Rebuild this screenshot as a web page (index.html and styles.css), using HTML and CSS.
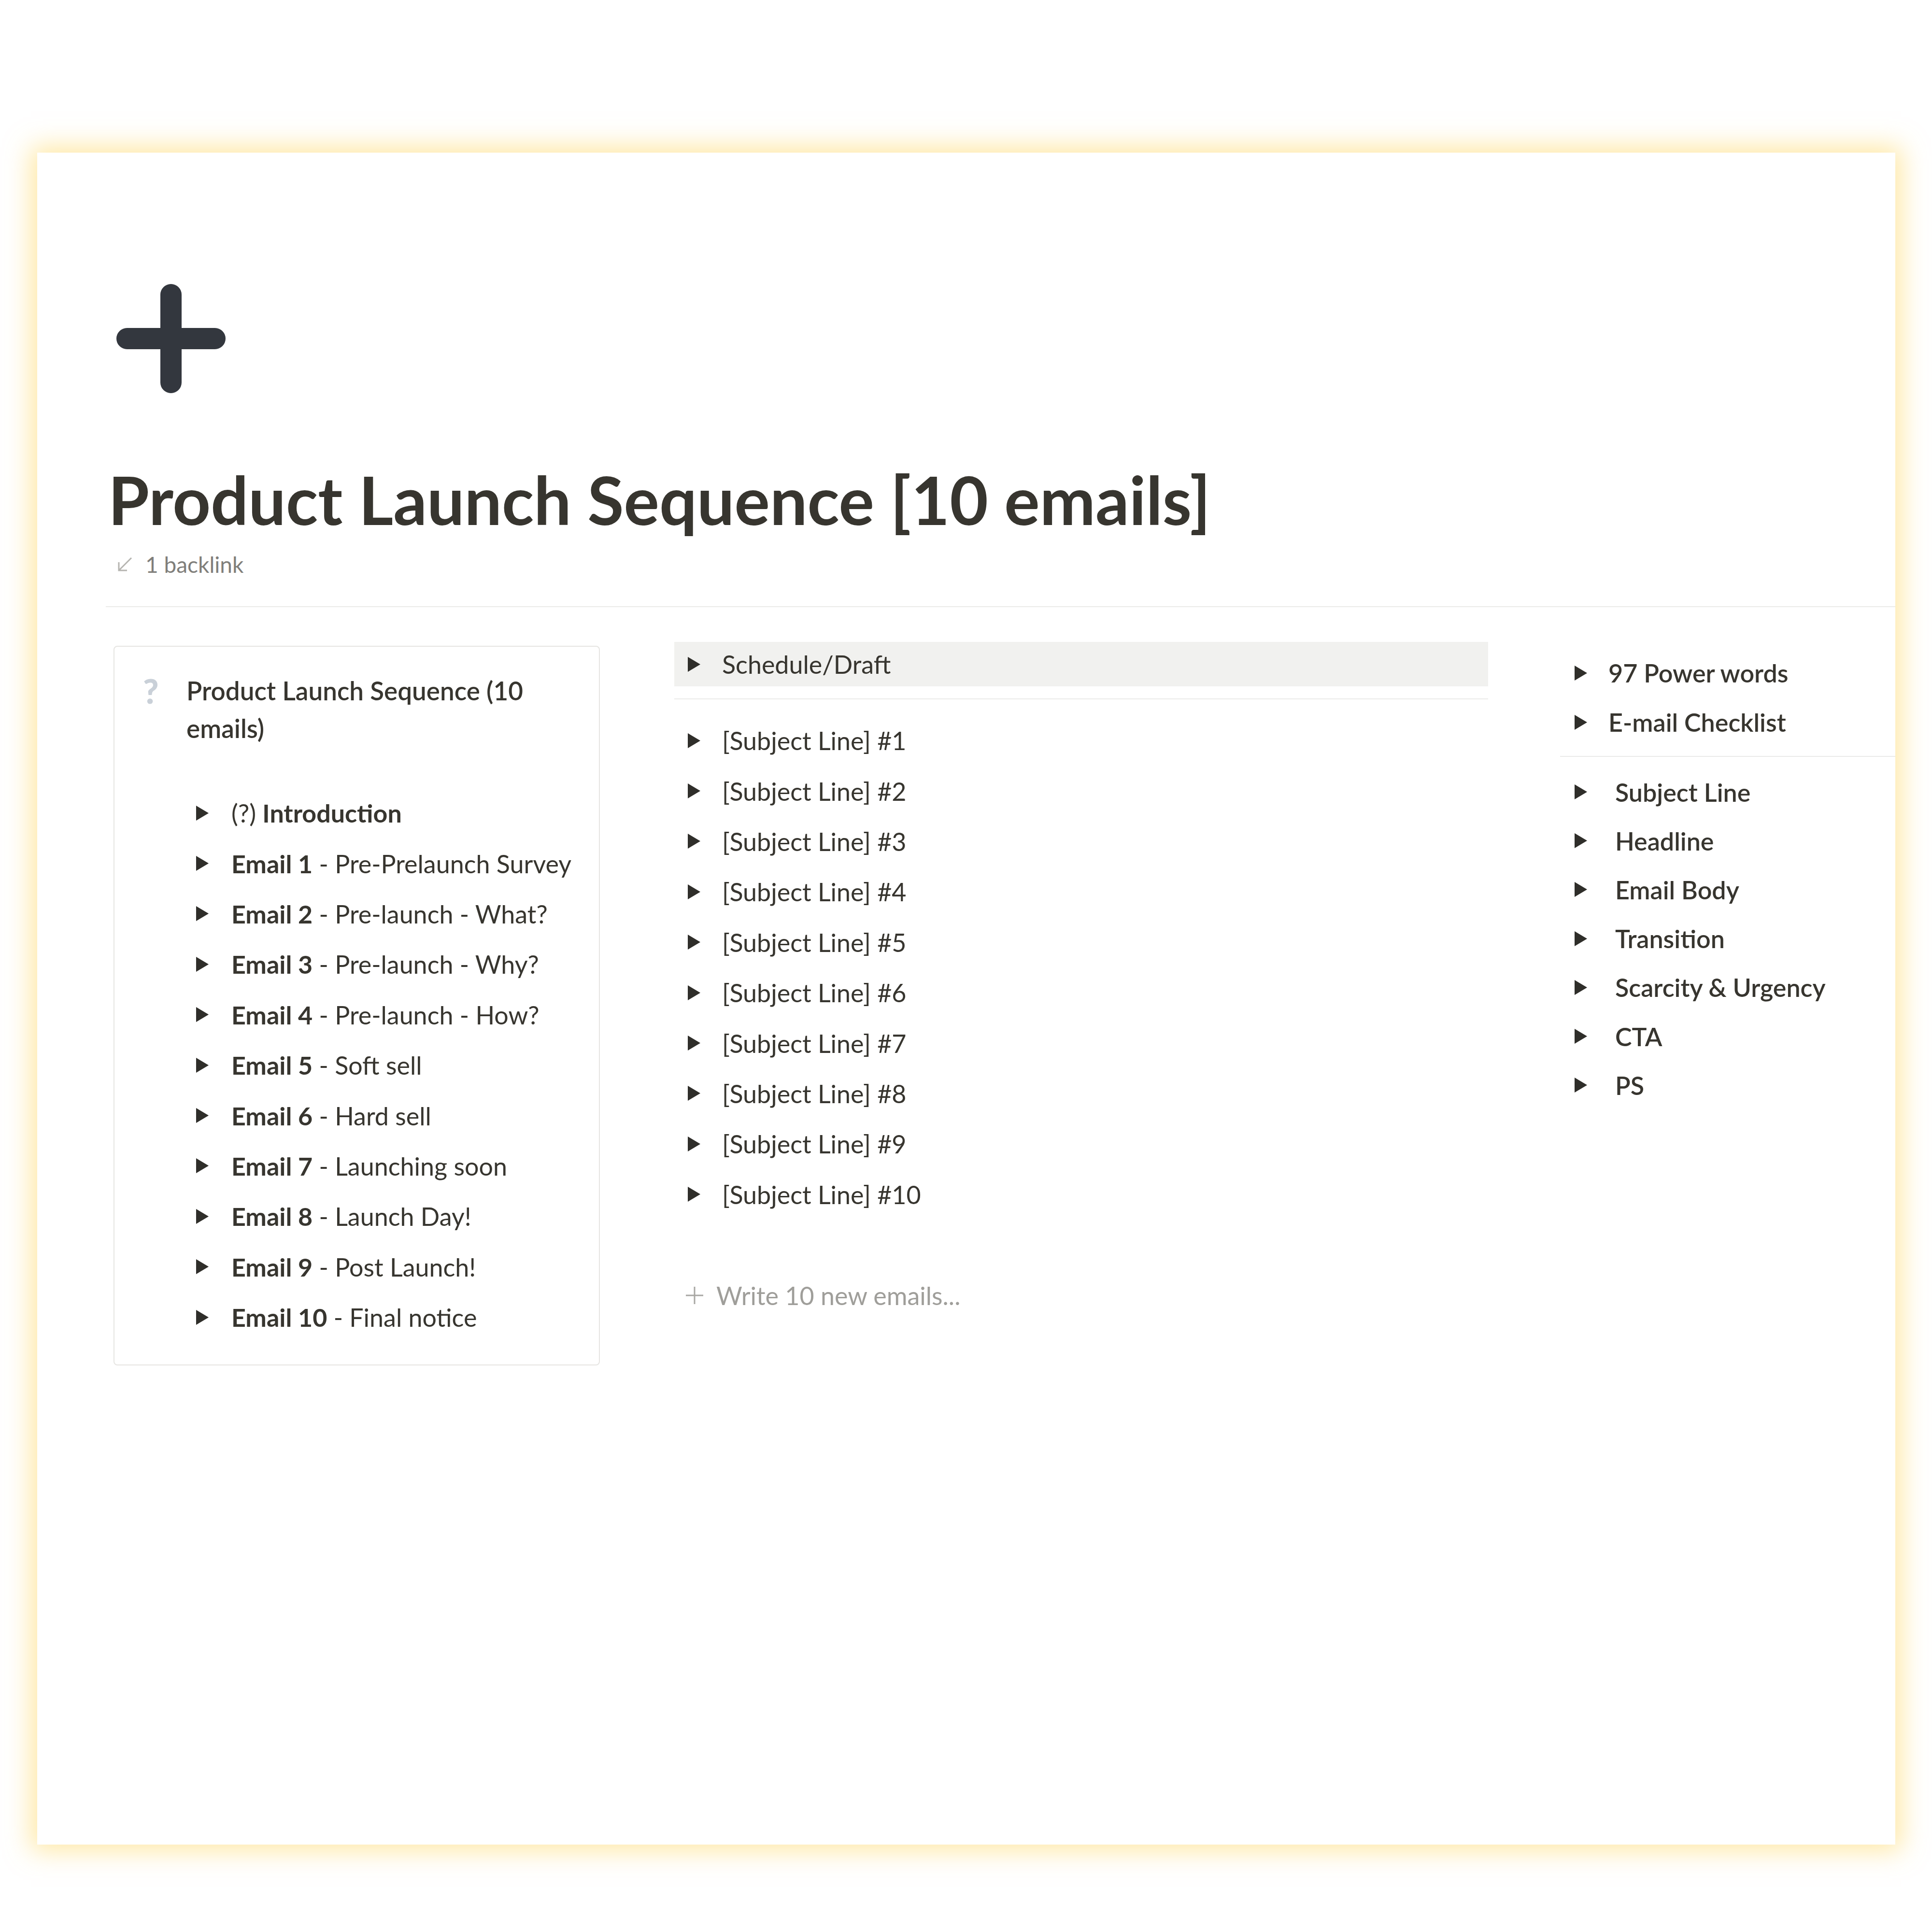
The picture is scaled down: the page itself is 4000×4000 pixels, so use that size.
FILE: index.html
```html
<!DOCTYPE html>
<html lang="en">
<head>
<meta charset="utf-8">
<title>Product Launch Sequence [10 emails]</title>
<link rel="stylesheet" href="styles.css">
</head>
<body>
<div class="panel">
  <div class="page">
    <div class="page-icon">
      <svg width="226" height="226" viewBox="0 0 226 226"><path d="M113 22V204M22 113H204" stroke="#33373e" stroke-width="44" stroke-linecap="round" fill="none"/></svg>
    </div>
    <h1 class="title">Product Launch Sequence [10 emails]</h1>
    <div class="backlinks">
      <svg class="bl-arrow" width="32" height="32" viewBox="0 0 32 32"><path d="M30 2L4 28M4 11V28H21" stroke="#b5b4b0" stroke-width="3" fill="none"/></svg>
      <span>1 backlink</span>
    </div>
    <div class="divider"></div>
    <div class="columns">
      <div class="col col-left">
        <div class="callout">
          <div class="callout-icon">?</div>
          <div class="callout-body">
            <div class="callout-title">Product Launch Sequence (10 emails)</div>
            <div class="toggle-list left-list">
              <div class="toggle"><svg class="tri" viewBox="0 0 28 33"><path d="M1 1L27 16.5L1 32Z"/></svg><span>(?) <b>Introduction</b></span></div>
              <div class="toggle"><svg class="tri" viewBox="0 0 28 33"><path d="M1 1L27 16.5L1 32Z"/></svg><span><b>Email 1</b> - Pre-Prelaunch Survey</span></div>
              <div class="toggle"><svg class="tri" viewBox="0 0 28 33"><path d="M1 1L27 16.5L1 32Z"/></svg><span><b>Email 2</b> - Pre-launch - What?</span></div>
              <div class="toggle"><svg class="tri" viewBox="0 0 28 33"><path d="M1 1L27 16.5L1 32Z"/></svg><span><b>Email 3</b> - Pre-launch - Why?</span></div>
              <div class="toggle"><svg class="tri" viewBox="0 0 28 33"><path d="M1 1L27 16.5L1 32Z"/></svg><span><b>Email 4</b> - Pre-launch - How?</span></div>
              <div class="toggle"><svg class="tri" viewBox="0 0 28 33"><path d="M1 1L27 16.5L1 32Z"/></svg><span><b>Email 5</b> - Soft sell</span></div>
              <div class="toggle"><svg class="tri" viewBox="0 0 28 33"><path d="M1 1L27 16.5L1 32Z"/></svg><span><b>Email 6</b> - Hard sell</span></div>
              <div class="toggle"><svg class="tri" viewBox="0 0 28 33"><path d="M1 1L27 16.5L1 32Z"/></svg><span><b>Email 7</b> - Launching soon</span></div>
              <div class="toggle"><svg class="tri" viewBox="0 0 28 33"><path d="M1 1L27 16.5L1 32Z"/></svg><span><b>Email 8</b> - Launch Day!</span></div>
              <div class="toggle"><svg class="tri" viewBox="0 0 28 33"><path d="M1 1L27 16.5L1 32Z"/></svg><span><b>Email 9</b> - Post Launch!</span></div>
              <div class="toggle"><svg class="tri" viewBox="0 0 28 33"><path d="M1 1L27 16.5L1 32Z"/></svg><span><b>Email 10</b> - Final notice</span></div>
            </div>
          </div>
        </div>
      </div>

      <div class="col col-mid">
        <div class="toggle schedule"><svg class="tri" viewBox="0 0 28 33"><path d="M1 1L27 16.5L1 32Z"/></svg><span>Schedule/Draft</span></div>
        <div class="divider mid-divider"></div>
        <div class="toggle-list mid-list">
          <div class="toggle"><svg class="tri" viewBox="0 0 28 33"><path d="M1 1L27 16.5L1 32Z"/></svg><span>[Subject Line] #1</span></div>
          <div class="toggle"><svg class="tri" viewBox="0 0 28 33"><path d="M1 1L27 16.5L1 32Z"/></svg><span>[Subject Line] #2</span></div>
          <div class="toggle"><svg class="tri" viewBox="0 0 28 33"><path d="M1 1L27 16.5L1 32Z"/></svg><span>[Subject Line] #3</span></div>
          <div class="toggle"><svg class="tri" viewBox="0 0 28 33"><path d="M1 1L27 16.5L1 32Z"/></svg><span>[Subject Line] #4</span></div>
          <div class="toggle"><svg class="tri" viewBox="0 0 28 33"><path d="M1 1L27 16.5L1 32Z"/></svg><span>[Subject Line] #5</span></div>
          <div class="toggle"><svg class="tri" viewBox="0 0 28 33"><path d="M1 1L27 16.5L1 32Z"/></svg><span>[Subject Line] #6</span></div>
          <div class="toggle"><svg class="tri" viewBox="0 0 28 33"><path d="M1 1L27 16.5L1 32Z"/></svg><span>[Subject Line] #7</span></div>
          <div class="toggle"><svg class="tri" viewBox="0 0 28 33"><path d="M1 1L27 16.5L1 32Z"/></svg><span>[Subject Line] #8</span></div>
          <div class="toggle"><svg class="tri" viewBox="0 0 28 33"><path d="M1 1L27 16.5L1 32Z"/></svg><span>[Subject Line] #9</span></div>
          <div class="toggle"><svg class="tri" viewBox="0 0 28 33"><path d="M1 1L27 16.5L1 32Z"/></svg><span>[Subject Line] #10</span></div>
        </div>
        <div class="new-row">
          <svg class="new-plus" width="40" height="40" viewBox="0 0 40 40"><path d="M20 2V38M2 20H38" stroke="#a8a7a3" stroke-width="3" fill="none"/></svg>
          <span>Write 10 new emails...</span>
        </div>
      </div>

      <div class="col col-right">
        <div class="toggle-list right-list-a">
          <div class="toggle"><svg class="tri" viewBox="0 0 28 33"><path d="M1 1L27 16.5L1 32Z"/></svg><span>97 Power words</span></div>
          <div class="toggle"><svg class="tri" viewBox="0 0 28 33"><path d="M1 1L27 16.5L1 32Z"/></svg><span>E-mail Checklist</span></div>
        </div>
        <div class="divider right-divider"></div>
        <div class="toggle-list right-list-b">
          <div class="toggle"><svg class="tri" viewBox="0 0 28 33"><path d="M1 1L27 16.5L1 32Z"/></svg><span>Subject Line</span></div>
          <div class="toggle"><svg class="tri" viewBox="0 0 28 33"><path d="M1 1L27 16.5L1 32Z"/></svg><span>Headline</span></div>
          <div class="toggle"><svg class="tri" viewBox="0 0 28 33"><path d="M1 1L27 16.5L1 32Z"/></svg><span>Email Body</span></div>
          <div class="toggle"><svg class="tri" viewBox="0 0 28 33"><path d="M1 1L27 16.5L1 32Z"/></svg><span>Transition</span></div>
          <div class="toggle"><svg class="tri" viewBox="0 0 28 33"><path d="M1 1L27 16.5L1 32Z"/></svg><span>Scarcity &amp; Urgency</span></div>
          <div class="toggle"><svg class="tri" viewBox="0 0 28 33"><path d="M1 1L27 16.5L1 32Z"/></svg><span>CTA</span></div>
          <div class="toggle"><svg class="tri" viewBox="0 0 28 33"><path d="M1 1L27 16.5L1 32Z"/></svg><span>PS</span></div>
        </div>
      </div>
    </div>
  </div>
</div>
</body>
</html>
```

FILE: styles.css
```css
html, body {
  margin: 0;
  padding: 0;
  background: #ffffff;
}

body {
  font-family: Lato, "Liberation Sans", sans-serif;
  color: #37352f;
  width: 4000px;
  height: 4000px;
  padding-top: 316px;
  box-sizing: border-box;
}

.panel {
  margin-left: 77px;
  width: 3847px;
  height: 3503px;
  background: #ffffff;
  overflow: hidden;
  box-shadow: 0 0 50px 12px rgba(255, 214, 90, 0.55);
}

.page {
  padding-left: 142px;
  padding-top: 272px;
}

.page-icon {
  margin-left: 22px;
  width: 226px;
  height: 226px;
}

.page-icon svg {
  display: block;
}

.title {
  margin: 139px 0 0 5px;
  font-size: 137.5px;
  line-height: 162px;
  font-weight: 700;
  color: #37352f;
  white-space: nowrap;
  letter-spacing: 0;
}

.backlinks {
  margin-top: 26px;
  height: 56px;
  display: flex;
  align-items: center;
  padding-left: 23px;
  font-size: 46px;
  line-height: 56px;
  color: #7f7e7a;
}

.bl-arrow {
  margin-right: 27px;
  flex: none;
}

.divider {
  height: 2px;
  background: #ebebe9;
}

.page > .divider {
  margin-top: 58px;
}

.columns {
  margin-top: 72px;
  display: flex;
  align-items: flex-start;
}

.col {
  flex: none;
}

/* left column / callout */
.col-left {
  margin-left: 16px;
  width: 1007px;
  padding-top: 8px;
}

.callout {
  border: 2px solid #e6e5e2;
  border-radius: 8px;
  padding: 52px 40px 45px 62px;
  display: flex;
  height: 1490px;
  box-sizing: border-box;
}

.callout-icon {
  flex: none;
  width: 90px;
  margin-left: -3px;
  font-size: 70px;
  line-height: 78px;
  font-weight: 900;
  color: #c9d0d8;
}

.callout-body {
  flex: 1;
  min-width: 0;
}

.callout-title {
  font-size: 53px;
  line-height: 78px;
  font-weight: 600;
}

.toggle {
  display: flex;
  align-items: center;
  font-size: 52px;
  white-space: nowrap;
}

.tri {
  flex: none;
  width: 28px;
  height: 33px;
  fill: #2f2e2a;
}

.toggle b {
  font-weight: 700;
}

.left-list {
  margin-top: 84px;
}

.left-list .toggle {
  height: 104.4px;
  padding-left: 19px;
}

.left-list .tri {
  margin-right: 46px;
}

/* middle column */
.col-mid {
  margin-left: 154px;
  width: 1685px;
}

.schedule {
  height: 92px;
  background: #f1f1ef;
  padding-left: 27px;
}

.schedule .tri,
.mid-list .tri {
  margin-right: 44px;
}

.mid-divider {
  margin-top: 25px;
}

.mid-list {
  margin-top: 33px;
}

.mid-list .toggle {
  height: 104.4px;
  padding-left: 27px;
}

.new-row {
  margin-top: 105px;
  height: 104px;
  display: flex;
  align-items: center;
  padding-left: 22px;
  font-size: 52px;
  color: #9f9e9a;
}

.new-plus {
  flex: none;
  margin-right: 25px;
}

/* right column */
.col-right {
  margin-left: 149px;
  width: 1200px;
}

.right-list-a {
  margin-top: 13px;
}

.right-list-a .toggle {
  height: 102px;
  padding-left: 28px;
  font-weight: 600;
}

.right-list-a .tri,
.right-list-b .tri {
  width: 30px;
  margin-right: 42px;
}

.right-divider {
  margin-top: 19px;
}

.right-list-b {
  margin-top: 22px;
}

.right-list-b .toggle {
  height: 101.2px;
  padding-left: 28px;
  font-weight: 600;
}

.right-list-b .toggle span {
  padding-left: 14px;
}
```
